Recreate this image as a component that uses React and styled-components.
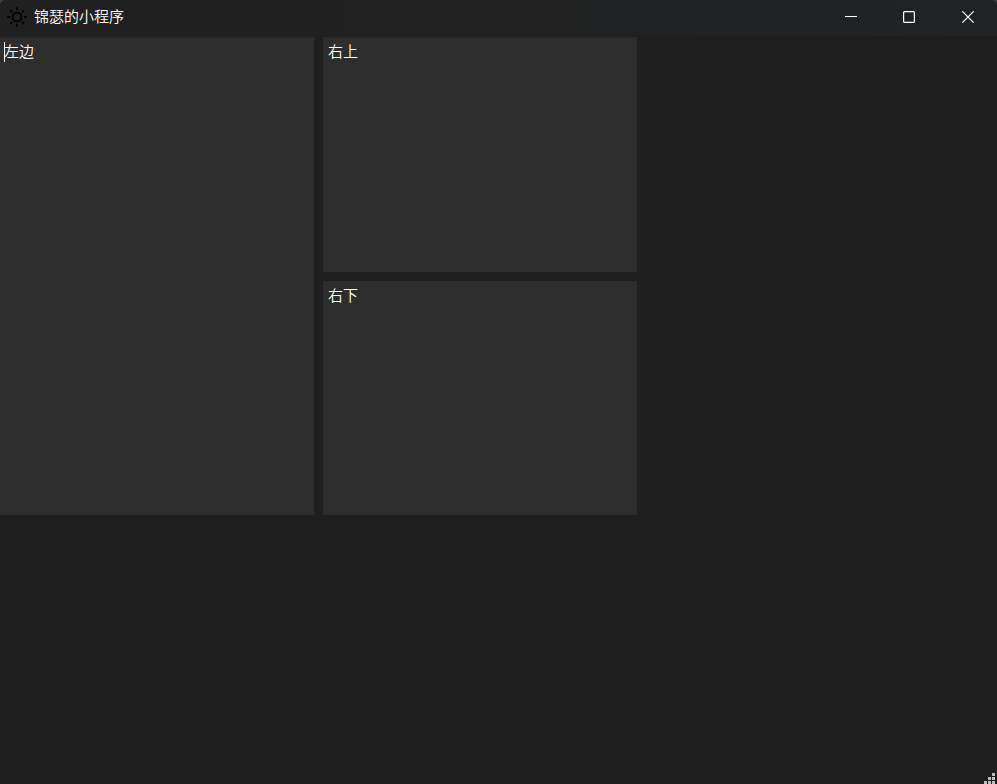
import React from 'react';
import styled, { createGlobalStyle } from 'styled-components';

const GlobalStyle = createGlobalStyle`
  html,
  body,
  #root {
    height: 100%;
    margin: 0;
    overflow: hidden;
    background: #3c3f3d;
  }
`;

const Window = styled.div`
  position: relative;
  display: flex;
  flex-direction: column;
  box-sizing: border-box;
  height: 100vh;
  overflow: hidden;
  border-radius: 6px 6px 0 0;
  background: #1e1e1e;
  color: #fff;
  font-family: 'Noto Sans CJK SC', sans-serif;
  font-size: 15px;
  font-weight: 350;
`;

const TitleBar = styled.header`
  display: flex;
  flex: none;
  align-items: center;
  height: 36px;
  background: linear-gradient(90deg, #202020 20%, #202224);
`;

const AppIcon = styled.svg`
  flex: none;
  width: 20px;
  height: 20px;
  margin: -3px 7px 0 7px;
`;

const Title = styled.span`
  flex: 1;
  line-height: 20px;
  margin-top: -5px;
`;

const WindowButton = styled.button`
  display: flex;
  align-items: center;
  justify-content: center;
  width: ${({ $width }) => $width}px;
  height: 34px;
  margin: 0 0 2px;
  padding: 0;
  border: none;
  background: none;
  color: #fff;
`;

const Panes = styled.main`
  display: grid;
  grid-template-columns: 314px 314px;
  grid-template-rows: 235px 234px;
  gap: 9px;
  margin-top: 1px;
`;

const Pane = styled.section`
  grid-row: ${({ $tall }) => ($tall ? 'span 2' : 'auto')};
  padding: ${({ $tall }) => ($tall ? '4px 4px' : '4px 5px')};
  background: #2d2d2d;
  line-height: 20px;
  outline: none;
`;

const Caret = styled.span`
  display: inline-block;
  width: 1px;
  height: 20px;
  margin: 1px -1px -1px 0;
  background: #fff;
  vertical-align: top;
`;

const SizeGrip = styled.svg`
  position: absolute;
  right: 2px;
  bottom: 0;
  width: 11px;
  height: 11px;
`;

const rays = [0, 45, 90, 135, 180, 225, 270, 315];

const SunIcon = () => (
  <AppIcon viewBox="0 0 20 20" fill="none" stroke="#000" strokeWidth="1.8">
    <circle cx="10" cy="10" r="4.4" />
    {rays.map(angle => (
      <path key={angle} d="M10 .2v2.8" transform={`rotate(${angle} 10 10)`} />
    ))}
  </AppIcon>
);

const gripDots = [[8, 0], [4, 4], [8, 4], [0, 8], [4, 8], [8, 8]];

export default function App() {
  return (
    <>
      <GlobalStyle />
      <Window>
        <TitleBar>
          <SunIcon />
          <Title>锦瑟的小程序</Title>
          <WindowButton $width={58} aria-label="Minimize">
            <svg width="12" height="12" stroke="currentColor">
              <path d="M0 5.5h12" />
            </svg>
          </WindowButton>
          <WindowButton $width={58} aria-label="Maximize">
            <svg width="12" height="12" fill="none" stroke="currentColor">
              <rect x=".6" y=".6" width="10.8" height="10.8" rx="1" strokeWidth="1.2" />
            </svg>
          </WindowButton>
          <WindowButton $width={59} aria-label="Close">
            <svg width="12" height="12" stroke="currentColor" strokeWidth="1.2">
              <path d="M.3.3l11.4 11.4M11.7.3L.3 11.7" />
            </svg>
          </WindowButton>
        </TitleBar>
        <Panes>
          <Pane $tall>
            <Caret />
            左边
          </Pane>
          <Pane>右上</Pane>
          <Pane>右下</Pane>
        </Panes>
        <SizeGrip fill="#bfbfbf">
          {gripDots.map(([x, y]) => (
            <rect key={`${x}-${y}`} x={x} y={y} width="3" height="3" />
          ))}
        </SizeGrip>
      </Window>
    </>
  );
}
